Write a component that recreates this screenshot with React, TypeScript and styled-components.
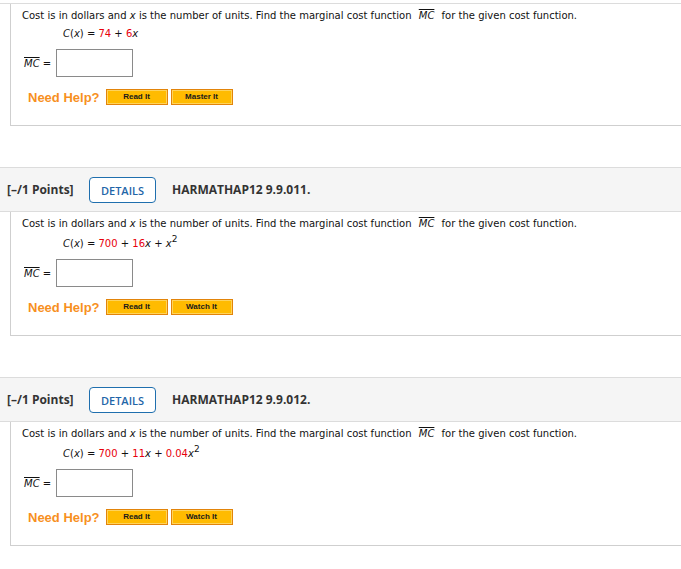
import React from "react";
import styled, { createGlobalStyle } from "styled-components";

const Global = createGlobalStyle`
  html, body { margin: 0; padding: 0; background: #fff; }
  body { width: 681px; overflow: hidden; }
`;

const Page = styled.div`
  display: flex;
  flex-direction: column;
  padding-top: 3px;
  width: 681px;
`;

const Question = styled.section<{ $continued?: boolean }>`
  display: flex;
  flex-direction: column;
  margin-bottom: 41px;
  border-top: ${(p) => (p.$continued ? "1px solid #dcdcdc" : "none")};
`;

const Header = styled.div`
  display: flex;
  align-items: center;
  height: 43px;
  background: #f5f5f5;
  border-top: 1px solid #dcdcdc;
  border-bottom: 1px solid #dcdcdc;
  padding-left: 7px;
  font-family: "Open Sans", "DejaVu Sans", sans-serif;
  font-weight: 700;
  font-size: 12px;
  color: #333;
`;

const Points = styled.span`
  width: 82px;
`;

const DetailsButton = styled.button`
  box-sizing: border-box;
  width: 67px;
  height: 26px;
  margin-right: 16px;
  margin-top: 1px;
  border: 1px solid #1f6fae;
  border-radius: 4px;
  background: #fff;
  color: #1f66a8;
  font-family: "Open Sans", "DejaVu Sans", sans-serif;
  font-weight: 600;
  font-size: 11px;
  padding: 0;
`;

const Body = styled.div`
  margin-left: 10px;
  border-left: 1px solid #cfcfcf;
  border-bottom: 1px solid #cfcfcf;
  padding: 5px 0 20px 11px;
  display: flex;
  flex-direction: column;
  font-family: "DejaVu Sans", Verdana, sans-serif;
  font-size: 10px;
  color: #111;
`;

const Prompt = styled.div`
  line-height: 14px;
  letter-spacing: 0.01px;
`;

const Formula = styled.div`
  margin-top: 4px;
  margin-left: 41px;
  line-height: 14px;
`;

const Red = styled.span`
  color: #e8000b;
`;

const Var = styled.i`
  font-style: italic;
`;

const Over = styled.i<{ $spaced?: boolean }>`
  font-style: italic;
  text-decoration: overline;
  margin: ${(p) => (p.$spaced ? "0 4px" : "0")};
`;

const Sup = styled.sup`
  font-size: 9px;
  line-height: 9px;
  vertical-align: 5px;
`;

const AnswerRow = styled.div`
  display: flex;
  align-items: center;
  margin-top: 8px;
  margin-left: 2px;
  gap: 5px;
`;

const AnswerBox = styled.div`
  box-sizing: border-box;
  width: 77px;
  height: 28px;
  border: 1px solid #8a8a8a;
  background: #fff;
`;

const HelpRow = styled.div`
  display: flex;
  align-items: center;
  margin-top: 12px;
  margin-left: 6px;
`;

const NeedHelp = styled.span`
  font-family: "Liberation Sans", Arial, sans-serif;
  font-weight: 700;
  font-size: 13px;
  color: #f7901e;
  margin-right: 6px;
`;

const HelpButton = styled.button`
  box-sizing: border-box;
  width: 62px;
  height: 16px;
  margin-right: 3px;
  padding: 0;
  border: 1px solid #e2840a;
  box-shadow: inset 0 0 0 1px #ffd35a;
  background: #ffbb00;
  font-family: "Liberation Sans", Arial, sans-serif;
  font-weight: 700;
  font-size: 8px;
  color: #1a1a1a;
  line-height: 14px;
`;

type Q = {
  code?: string;
  formula: React.ReactNode;
  second: string;
};

const questions: Q[] = [
  {
    formula: (
      <>
        <Var>C</Var>(<Var>x</Var>) = <Red>74</Red> + <Red>6</Red>
        <Var>x</Var>
      </>
    ),
    second: "Master It",
  },
  {
    code: "HARMATHAP12 9.9.011.",
    formula: (
      <>
        <Var>C</Var>(<Var>x</Var>) = <Red>700</Red> + <Red>16</Red>
        <Var>x</Var> + <Var>x</Var>
        <Sup>2</Sup>
      </>
    ),
    second: "Watch It",
  },
  {
    code: "HARMATHAP12 9.9.012.",
    formula: (
      <>
        <Var>C</Var>(<Var>x</Var>) = <Red>700</Red> + <Red>11</Red>
        <Var>x</Var> + <Red>0.04</Red>
        <Var>x</Var>
        <Sup>2</Sup>
      </>
    ),
    second: "Watch It",
  },
];

export default function App() {
  return (
    <>
      <Global />
      <Page>
        {questions.map((q, i) => (
          <Question key={i} $continued={!q.code}>
            {q.code && (
              <Header>
                <Points>[–/1 Points]</Points>
                <DetailsButton>DETAILS</DetailsButton>
                <span>{q.code}</span>
              </Header>
            )}
            <Body>
              <Prompt>
                Cost is in dollars and <Var>x</Var> is the number of units. Find the marginal cost function{" "}
                <Over $spaced>MC</Over> for the given cost function.
              </Prompt>
              <Formula>{q.formula}</Formula>
              <AnswerRow>
                <span>
                  <Over>MC</Over> =
                </span>
                <AnswerBox />
              </AnswerRow>
              <HelpRow>
                <NeedHelp>Need Help?</NeedHelp>
                <HelpButton>Read It</HelpButton>
                <HelpButton>{q.second}</HelpButton>
              </HelpRow>
            </Body>
          </Question>
        ))}
      </Page>
    </>
  );
}
